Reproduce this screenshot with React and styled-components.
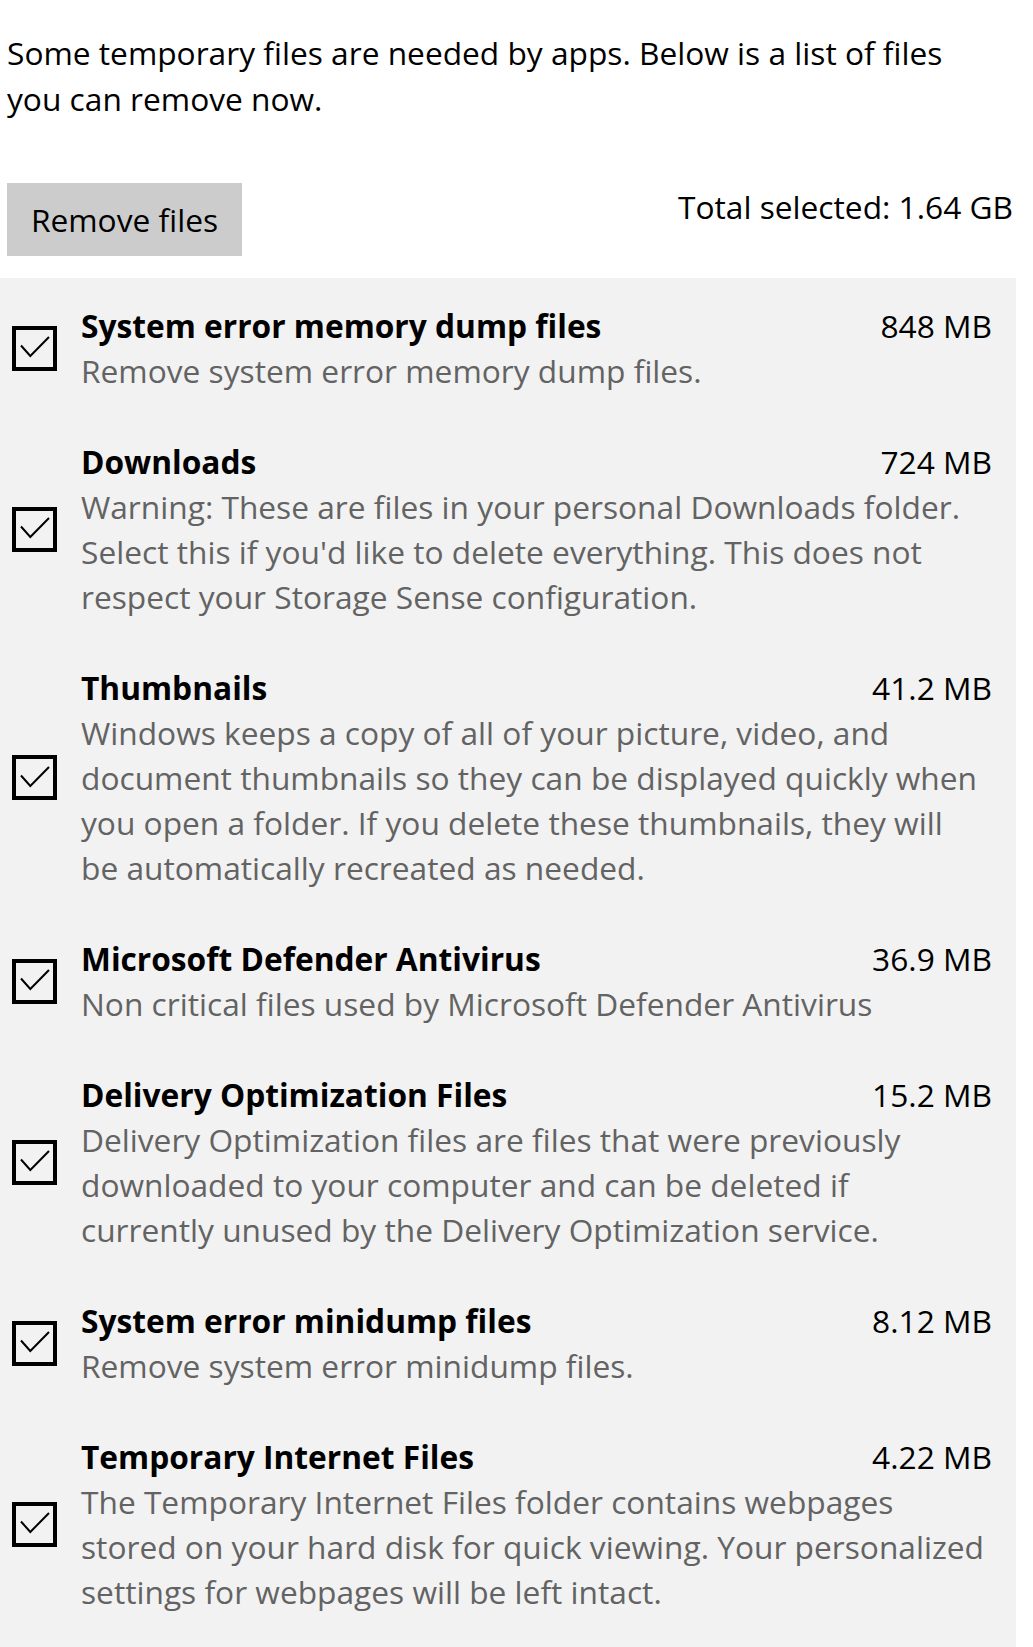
import styled, { createGlobalStyle } from 'styled-components';

const GlobalStyle = createGlobalStyle`
	html, body {
		margin: 0;
		background: #ffffff;
	}
	body {
		font-family: 'Open Sans', 'Noto Sans', sans-serif;
		color: #000000;
	}
`;

const ITEMS = [
	{
		id: 'dump',
		title: 'System error memory dump files',
		size: '848 MB',
		lines: ['Remove system error memory dump files.'],
	},
	{
		id: 'downloads',
		title: 'Downloads',
		size: '724 MB',
		lines: [
			'Warning: These are files in your personal Downloads folder.',
			"Select this if you'd like to delete everything. This does not",
			'respect your Storage Sense configuration.',
		],
	},
	{
		id: 'thumbs',
		title: 'Thumbnails',
		size: '41.2 MB',
		lines: [
			'Windows keeps a copy of all of your picture, video, and',
			'document thumbnails so they can be displayed quickly when',
			'you open a folder. If you delete these thumbnails, they will',
			'be automatically recreated as needed.',
		],
	},
	{
		id: 'defender',
		title: 'Microsoft Defender Antivirus',
		size: '36.9 MB',
		lines: ['Non critical files used by Microsoft Defender Antivirus'],
	},
	{
		id: 'delivery',
		title: 'Delivery Optimization Files',
		size: '15.2 MB',
		lines: [
			'Delivery Optimization files are files that were previously',
			'downloaded to your computer and can be deleted if',
			'currently unused by the Delivery Optimization service.',
		],
	},
	{
		id: 'minidump',
		title: 'System error minidump files',
		size: '8.12 MB',
		lines: ['Remove system error minidump files.'],
	},
	{
		id: 'inet',
		title: 'Temporary Internet Files',
		size: '4.22 MB',
		lines: [
			'The Temporary Internet Files folder contains webpages',
			'stored on your hard disk for quick viewing. Your personalized',
			'settings for webpages will be left intact.',
		],
	},
];

const Page = styled.div`
	padding-top: 30px;
	font-size: 31.7px;
`;

const Intro = styled.p`
	margin: 0;
	padding: 0 7px;
	max-width: 965px;
	line-height: 46px;
`;

const Toolbar = styled.div`
	display: flex;
	justify-content: space-between;
	align-items: flex-start;
	margin-top: 61px;
	padding: 0 20px 0 7px;
`;

const Button = styled.button`
	width: 235px;
	height: 73px;
	border: none;
	background: #cccccc;
	font-family: inherit;
	font-size: inherit;
	color: #000000;
	padding: 0;
	cursor: pointer;
`;

const Total = styled.span`
	margin-top: 1px;
	line-height: 45px;
`;

const Panel = styled.div`
	width: 1016px;
	box-sizing: border-box;
	margin-top: 22px;
	padding: 25px 24px 40px 12px;
	background: #f2f2f2;
	display: flex;
	flex-direction: column;
	gap: 46px;
`;

const Item = styled.div`
	display: flex;
	align-items: center;
	gap: 24px;
`;

const Box = styled.span`
	flex: none;
	width: 45px;
	height: 45px;
	box-sizing: border-box;
	border: 4.5px solid #000000;
	display: flex;
	align-items: center;
	justify-content: center;
`;

const Body = styled.div`
	flex: 1;
	line-height: 45px;
`;

const Head = styled.div`
	display: flex;
	justify-content: space-between;
`;

const Title = styled.span`
	font-weight: 700;
`;

const Desc = styled.div`
	color: #636363;
	white-space: nowrap;
`;

const Check = () => (
	<svg width="36" height="36" viewBox="0 0 36 36" fill="none">
		<path d="M4 15.5 L13.3 26 L32 7" stroke="#000" strokeWidth="2" />
	</svg>
);

export default function App() {
	return (
		<Page>
			<GlobalStyle />
			<Intro>
				Some temporary files are needed by apps. Below is a list of files
				you can remove now.
			</Intro>
			<Toolbar>
				<Button>Remove files</Button>
				<Total>Total selected: 1.64 GB</Total>
			</Toolbar>
			<Panel>
				{ITEMS.map(({ id, title, size, lines }) => (
					<Item key={id}>
						<Box>
							<Check />
						</Box>
						<Body>
							<Head>
								<Title>{title}</Title>
								<span>{size}</span>
							</Head>
							{lines.map((line) => (
								<Desc key={line}>{line}</Desc>
							))}
						</Body>
					</Item>
				))}
			</Panel>
		</Page>
	);
}
